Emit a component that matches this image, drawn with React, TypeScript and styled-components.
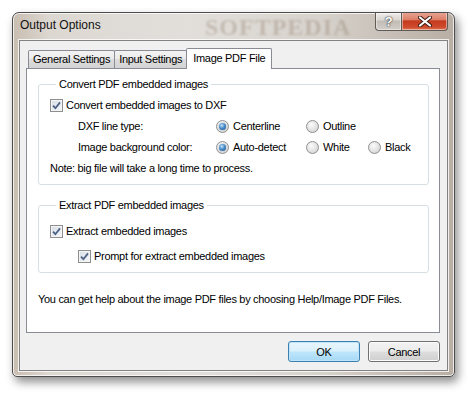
import React from 'react'
import styled, { createGlobalStyle } from 'styled-components'

const GlobalStyle = createGlobalStyle`
  html, body {
    margin: 0;
    background: #fff;
  }
  body {
    font-family: "Liberation Sans", Arial, sans-serif;
    font-size: 11px;
    letter-spacing: -0.3px;
    color: #000;
  }
`

const Page = styled.div`
  width: 474px;
  height: 397px;
  box-sizing: border-box;
  padding: 12px 0 0 12px;
`

const Window = styled.div`
  position: relative;
  width: 443px;
  height: 365px;
  box-sizing: border-box;
  display: flex;
  flex-direction: column;
  border: 1px solid #4d4d4d;
  border-radius: 7px 7px 5px 5px;
  background: linear-gradient(90deg, #c9bdb0 0%, #dcd7d1 8%, #e2dfdb 40%, #d7d2cc 70%, #b8aea4 100%);
  box-shadow: 3px 5px 10px rgba(0, 0, 0, 0.45), inset 0 0 0 1px rgba(255, 255, 255, 0.75);
`

const TitleBar = styled.div`
  position: relative;
  height: 27px;
  display: flex;
  align-items: flex-start;
  padding-left: 7px;
  overflow: hidden;
`

const Title = styled.span`
  font-size: 12px;
  letter-spacing: 0;
  line-height: 15px;
  margin-top: 5px;
  color: #111;
`

const TitleMark = styled.span`
  position: absolute;
  left: 192px;
  top: 1px;
  font-family: "Liberation Serif", serif;
  font-weight: bold;
  font-size: 24px;
  line-height: 26px;
  letter-spacing: 1px;
  color: rgba(120, 95, 75, 0.26);
  filter: blur(1.2px);
  pointer-events: none;
`

const CaptionButtons = styled.div`
  margin-left: auto;
  margin-right: 6px;
  margin-top: -1px;
  display: flex;
`

const CaptionButton = styled.div<{ close?: boolean }>`
  width: ${p => (p.close ? 46 : 27)}px;
  height: 19px;
  box-sizing: border-box;
  display: flex;
  align-items: center;
  justify-content: center;
  border: 1px solid #5f5a56;
  border-top: none;
  border-left-width: ${p => (p.close ? 0 : 1)}px;
  border-radius: ${p => (p.close ? '0 0 4px 0' : '0 0 0 4px')};
  background: ${p =>
    p.close
      ? 'linear-gradient(180deg, #e9a897 0%, #dc8068 42%, #c5391d 50%, #cf4b2f 85%, #e07a55 100%)'
      : 'linear-gradient(180deg, rgba(255,255,255,0.75) 0%, rgba(225,222,218,0.7) 45%, rgba(190,185,180,0.7) 50%, rgba(215,212,208,0.7) 100%)'};
  box-shadow: inset 0 0 0 1px rgba(255, 255, 255, 0.45);
  color: #fff;
  font-weight: bold;
  font-size: 13px;
  text-shadow: 0 0 2px #333, 0 0 1px #222;
`

const Client = styled.div`
  flex: 1;
  margin: 0 6px 5px 6px;
  display: flex;
  flex-direction: column;
  padding: 7px 7px 8px 6px;
  background: #f0f0f0;
  border: 1px solid #828282;
  box-shadow: 0 0 0 1px rgba(255, 255, 255, 0.8);
`

const TabStrip = styled.div`
  position: relative;
  z-index: 1;
  display: flex;
  align-items: flex-end;
  height: 21px;
  margin: 0 0 -1px 2px;
`

const Tab = styled.div<{ active?: boolean }>`
  box-sizing: border-box;
  height: ${p => (p.active ? 21 : 18)}px;
  margin: ${p => (p.active ? '0 -2px 0 -1px' : '0 0 1px -1px')};
  padding: ${p => (p.active ? '2px 6px 0 6px' : '1px 4px 0 4px')};
  border: 1px solid #898c95;
  border-bottom: none;
  border-radius: 2px 2px 0 0;
  line-height: 15px;
  white-space: nowrap;
  background: ${p =>
    p.active ? '#fff' : 'linear-gradient(180deg, #f3f3f3 0%, #ebebeb 45%, #dddddd 50%, #d3d3d3 100%)'};
  z-index: ${p => (p.active ? 2 : 0)};
  &:first-child {
    margin-left: 0;
  }
`

const Panel = styled.div`
  flex: 1;
  display: flex;
  flex-direction: column;
  padding: 0 10px 0 11px;
  background: #fff;
  border: 1px solid #898c95;
`

const Group = styled.fieldset<{ top: number; padTop: number }>`
  margin: ${p => p.top}px 0 0 0;
  padding: ${p => p.padTop}px 0 6px 11px;
  border: 1px solid #d5dfe5;
  border-radius: 3px;
  min-width: 0;
`

const Legend = styled.legend`
  margin-left: 6px;
  padding: 0 3px;
  line-height: 14px;
`

const OptionsGrid = styled.div`
  display: grid;
  grid-template-columns: 28px 138px 90px 62px auto;
  grid-auto-rows: 20px;
  row-gap: 1px;
  align-items: center;
`

const Wide = styled.div`
  grid-column: 1 / -1;
  display: flex;
  align-items: center;
`

const Cell = styled.div<{ col: number }>`
  grid-column: ${p => p.col};
  display: flex;
  align-items: center;
  white-space: nowrap;
`

const CheckList = styled.div`
  display: flex;
  flex-direction: column;
  gap: 5px;
`

const CheckRow = styled.div<{ indent?: number }>`
  height: 20px;
  display: flex;
  align-items: center;
  padding-left: ${p => p.indent ?? 0}px;
`

const Box = styled.span`
  width: 13px;
  height: 13px;
  box-sizing: border-box;
  flex: none;
  display: flex;
  align-items: center;
  justify-content: center;
  margin-right: 3px;
  border: 1px solid #8f8f8f;
  background: linear-gradient(135deg, #d6dde6 0%, #f6f7f9 100%);
  box-shadow: inset 0 0 0 1px #f4f4f4;
`

const RadioDot = styled.span<{ checked?: boolean }>`
  width: 13px;
  height: 13px;
  box-sizing: border-box;
  flex: none;
  display: flex;
  align-items: center;
  justify-content: center;
  margin-right: 4px;
  border-radius: 50%;
  border: 1px solid #8e8f8f;
  background: radial-gradient(circle at 40% 35%, #fbfbfb 0%, #e2e2e2 55%, #c8c8c8 100%);
  &::after {
    content: '';
    display: ${p => (p.checked ? 'block' : 'none')};
    width: 7px;
    height: 7px;
    border-radius: 50%;
    background: radial-gradient(circle at 40% 35%, #c4e6fb 0%, #4a8cc8 45%, #1a4f86 100%);
    box-shadow: 0 0 1px #5a8ab8;
  }
`

const HelpText = styled.div`
  margin-top: 19px;
  line-height: 14px;
`

const ButtonRow = styled.div`
  display: flex;
  justify-content: flex-end;
  gap: 8px;
  margin-top: 8px;
`

const Button = styled.button<{ primary?: boolean }>`
  width: 72px;
  height: 21px;
  padding: 0;
  font-family: inherit;
  font-size: 11px;
  letter-spacing: -0.3px;
  color: #000;
  border-radius: 3px;
  border: 1px solid ${p => (p.primary ? '#3c7fb1' : '#707070')};
  background: ${p =>
    p.primary
      ? 'linear-gradient(180deg, #eaf6fd 0%, #d9f0fc 48%, #bee6fd 52%, #a7d9f5 100%)'
      : 'linear-gradient(180deg, #f2f2f2 0%, #ebebeb 48%, #dddddd 52%, #cfcfcf 100%)'};
  box-shadow: inset 0 0 0 1px ${p => (p.primary ? '#bfe3f8' : '#fcfcfc')};
`

const CheckBox = () => (
  <Box>
    <svg width="9" height="9" viewBox="0 0 9 9">
      <path d="M1 4.6 L3.4 7.2 L8 1.4" fill="none" stroke="#4d6185" strokeWidth="1.8" />
    </svg>
  </Box>
)

const Radio = ({ checked, label }: { checked?: boolean; label: string }) => (
  <>
    <RadioDot checked={checked} />
    <span>{label}</span>
  </>
)

const CloseGlyph = () => (
  <svg width="14" height="11" viewBox="0 0 14 11">
    <path d="M2 1.5 L12 9.5 M12 1.5 L2 9.5" stroke="#3a1a12" strokeWidth="4" strokeLinecap="round" />
    <path d="M2 1.5 L12 9.5 M12 1.5 L2 9.5" stroke="#fff" strokeWidth="2.2" strokeLinecap="round" />
  </svg>
)

export default function App() {
  return (
    <>
      <GlobalStyle />
      <Page>
        <Window>
          <TitleBar>
            <Title>Output Options</Title>
            <TitleMark aria-hidden>SOFTPEDIA</TitleMark>
            <CaptionButtons>
              <CaptionButton>?</CaptionButton>
              <CaptionButton close>
                <CloseGlyph />
              </CaptionButton>
            </CaptionButtons>
          </TitleBar>
          <Client>
            <TabStrip>
              <Tab>General Settings</Tab>
              <Tab>Input Settings</Tab>
              <Tab active>Image PDF File</Tab>
            </TabStrip>
            <Panel>
              <Group top={8} padTop={4}>
                <Legend>Convert PDF embedded images</Legend>
                <OptionsGrid>
                  <Wide>
                    <CheckBox />
                    <span>Convert embedded images to DXF</span>
                  </Wide>
                  <Cell col={2}>DXF line type:</Cell>
                  <Cell col={3}>
                    <Radio checked label="Centerline" />
                  </Cell>
                  <Cell col={4}>
                    <Radio label="Outline" />
                  </Cell>
                  <Cell col={2}>Image background color:</Cell>
                  <Cell col={3}>
                    <Radio checked label="Auto-detect" />
                  </Cell>
                  <Cell col={4}>
                    <Radio label="White" />
                  </Cell>
                  <Cell col={5}>
                    <Radio label="Black" />
                  </Cell>
                  <Wide>Note: big file will take a long time to process.</Wide>
                </OptionsGrid>
              </Group>
              <Group top={13} padTop={9}>
                <Legend>Extract PDF embedded images</Legend>
                <CheckList>
                  <CheckRow>
                    <CheckBox />
                    <span>Extract embedded images</span>
                  </CheckRow>
                  <CheckRow indent={28}>
                    <CheckBox />
                    <span>Prompt for extract embedded images</span>
                  </CheckRow>
                </CheckList>
              </Group>
              <HelpText>You can get help about the image PDF files by choosing Help/Image PDF Files.</HelpText>
            </Panel>
            <ButtonRow>
              <Button primary>OK</Button>
              <Button>Cancel</Button>
            </ButtonRow>
          </Client>
        </Window>
      </Page>
    </>
  )
}
